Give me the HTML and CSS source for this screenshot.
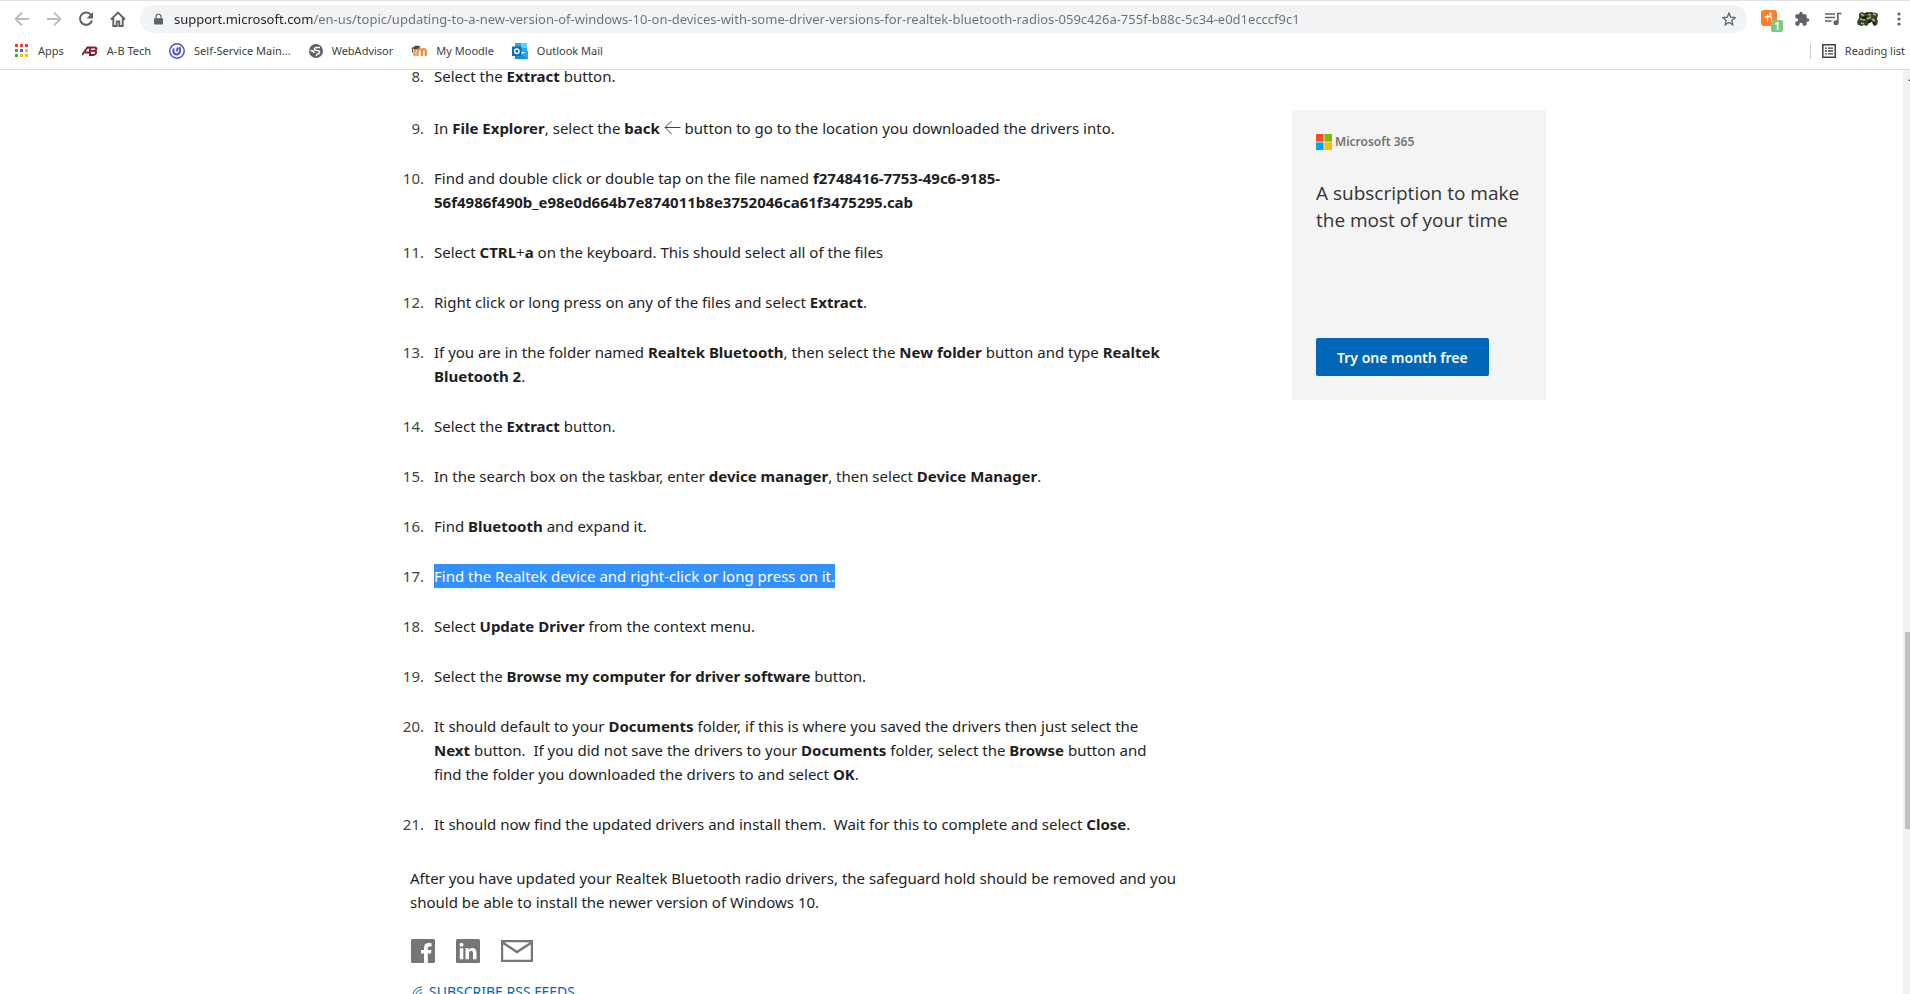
FILE: index.html
```html
<!DOCTYPE html>
<html lang="en">
<head>
<meta charset="utf-8">
<title>Updating to a new version of Windows 10</title>
<link rel="stylesheet" href="styles.css">
</head>
<body>
<header class="browser">
  <div class="toolbar">
    <nav class="nav-buttons" aria-label="Browser navigation">
      <button class="icon-button muted" aria-label="Back"><svg width="16" height="16" viewBox="0 0 16 16"><path d="M15 8H2M8 1.5 1.5 8 8 14.500" fill="none" stroke="currentColor" stroke-width="1.800"/></svg></button>
      <button class="icon-button muted" aria-label="Forward"><svg width="16" height="16" viewBox="0 0 16 16"><path d="M1 8h13M8 1.500 14.500 8 8 14.500" fill="none" stroke="currentColor" stroke-width="1.800"/></svg></button>
      <button class="icon-button" aria-label="Reload"><svg width="16" height="16" viewBox="0 0 16 16"><path d="M13.300 4.200A6.200 6.200 0 1 0 14 9.700" fill="none" stroke="currentColor" stroke-width="2"/><path d="M15 1v6.500H8.500z" fill="currentColor"/></svg></button>
      <button class="icon-button" aria-label="Home"><svg width="16" height="16" viewBox="0 0 16 16"><path d="M1 8.500 8 1.500l7 7M3.300 7v8h3.400v-4.500h2.600V15h3.400V7" fill="none" stroke="currentColor" stroke-width="1.900"/></svg></button>
    </nav>
    <div class="address">
      <svg class="lock" width="9" height="13" viewBox="0 0 10 13"><path d="M1 5h8q1 0 1 1v5q0 1-1 1H1q-1 0-1-1V6q0-1 1-1z" fill="currentColor"/><path d="M2.200 6V3.500a2.800 2.800 0 0 1 5.600 0V6" fill="none" stroke="currentColor" stroke-width="1.300"/></svg>
      <input class="url" type="text" aria-label="Address" value="support.microsoft.com/en-us/topic/updating-to-a-new-version-of-windows-10-on-devices-with-some-driver-versions-for-realtek-bluetooth-radios-059c426a-755f-b88c-5c34-e0d1ecccf9c1">
      <button class="icon-button" aria-label="Bookmark this page"><svg width="14" height="14" viewBox="0 0 14 14"><path d="m7 1 1.700 4.100 4.500.4-3.400 2.900 1 4.400L7 10.500l-3.800 2.300 1-4.400L.8 5.500l4.500-.4z" fill="none" stroke="currentColor" stroke-width="1.300"/></svg></button>
    </div>
    <div class="extensions">
      <button class="icon-button honey" aria-label="Honey"><svg width="22" height="22" viewBox="0 0 22 22"><rect width="16" height="16" rx="3" fill="#ff7e27"/><path d="M6.500 4.200v8M6.500 8.500c0-3 4-2.500 4 0V12M3.800 6.800c3.500.4 6-1 6.200-3.300M8.500 4.300c0-1.800 2.500-1.200 1.300.6" fill="none" stroke="#fff" stroke-width="1.200"/></svg><span class="badge">1</span></button>
      <button class="icon-button" aria-label="Extensions"><svg width="16" height="16" viewBox="0 0 24 24"><path d="M20.500 11H19V7c0-1.100-.9-2-2-2h-4V3.500a2.500 2.500 0 0 0-5 0V5H4c-1.100 0-2 .9-2 2v3.800h1.500a2.700 2.700 0 0 1 0 5.400H2V20c0 1.100.9 2 2 2h3.800v-1.500a2.700 2.700 0 0 1 5.400 0V22H17c1.100 0 2-.9 2-2v-4h1.500a2.500 2.500 0 0 0 0-5z" fill="currentColor"/></svg></button>
      <button class="icon-button" aria-label="Media controls"><svg width="17" height="14" viewBox="0 0 17 14"><path d="M0 2h10M0 5.500h10M0 9h6.500M12.800 11V1.500H16.500" fill="none" stroke="currentColor" stroke-width="1.700"/><circle cx="11" cy="10.800" r="2.500" fill="currentColor"/></svg></button>
      <button class="icon-button" aria-label="Profile"><svg width="22" height="16" viewBox="0 0 22 16"><path d="M2 3 4 1l4 1 5-1 7 1 1 2-1 4 1 2-1 4-3 1-2-4-3 1-2 3-3-1-2 1-4-1-1-3 2-4z" fill="#364427"/><path d="m4 3 3 2M9 3l5 1M16 3l3 1M3 8l5 1M10 8l4-2M15 8l3 2M4 12l3 1" stroke="#b9ad83" stroke-width="1.700"/><path d="m5 7 4-1M11 11l3-1M16 12l2 1M9 2l2 1" stroke="#101910" stroke-width="2"/></svg></button>
      <button class="icon-button menu" aria-label="Browser menu"><svg width="4" height="14" viewBox="0 0 4 14"><g fill="currentColor"><circle cx="2" cy="2" r="1.600"/><circle cx="2" cy="7" r="1.600"/><circle cx="2" cy="12" r="1.600"/></g></svg></button>
    </div>
  </div>
  <nav class="bookmarks" aria-label="Bookmarks">
    <a href="#" class="bookmark apps"><svg width="14" height="14" viewBox="0 0 14 14"><path d="M0 0h3v3H0zM5 0h3v3H5zM10 0h3v3h-3z" fill="#ea4335"/><path d="M0 5h3v3H0zM0 10h3v3H0z" fill="#34a853"/><path d="M5 5h3v3H5z" fill="#1a73e8"/><path d="M10 5h3v3h-3zM5 10h3v3H5zM10 10h3v3h-3z" fill="#fbbc04"/></svg><span>Apps</span></a>
    <a href="#" class="bookmark abtech"><svg width="16" height="16" viewBox="0 0 16 16"><path d="M0 12 5.500 4.500H8V12M3 9.500h5M8 12V4.500h4.500q2.500.3 1.700 2-.4 1.200-2.200 1.400 2.800.4 2 2.300-.7 1.800-2.800 1.800zM9 7.900h4" fill="none" stroke="#8c1630" stroke-width="1.900"/></svg><span>A-B Tech</span></a>
    <a href="#" class="bookmark service"><svg width="16" height="16" viewBox="0 0 16 16"><circle cx="8" cy="8" r="7.200" fill="none" stroke="#4d4fcf" stroke-width="1.500"/><path d="M4.800 5.500C3.500 9 5 11.500 7.500 11.500c3 0 4.800-4 3-7.500M8.800 4.500 7.800 8.500" fill="none" stroke="#4d4fcf" stroke-width="2"/></svg><span>Self-Service Main...</span></a>
    <a href="#" class="bookmark webadvisor"><svg width="14" height="14" viewBox="0 0 14 14"><circle cx="7" cy="7" r="7" fill="#5f6368"/><path d="M11 3.500H7.500q-2 0-2 1.500T8 6.500q2.500 0 2.500 1.700T8.500 10q-1 0-1 2M1.500 6.500q3.500 0 3.500 2.500" fill="none" stroke="#fff" stroke-width="1.500"/></svg><span>WebAdvisor</span></a>
    <a href="#" class="bookmark moodle"><svg width="16" height="16" viewBox="0 0 16 16"><path d="M3.500 13V8q0-1.500 1.500-1.500M6.500 13V8.500Q6.800 6 8.800 6 11 6 11 8.500V13M11 13V8.500Q11 6 13 6q1.800 0 1.800 2.500V13" fill="none" stroke="#f68b32" stroke-width="2.200"/><path d="m0 5.500 5-3 5 1-4 3z" fill="#4a4a4a"/><path d="M1.500 5.500v4" stroke="#555"/></svg><span>My Moodle</span></a>
    <a href="#" class="bookmark outlook"><svg width="16" height="16" viewBox="0 0 16 16"><path d="M3 0h12v9H3z" fill="#28a8ea"/><path d="M9 0h6v5H9z" fill="#50d9ff"/><path d="M3 4h6v5H3z" fill="#0364b8"/><path d="m3 8 6.500 4L16 8v8H3z" fill="#1490df"/><path d="m9 11 7 5V8z" fill="#28a8ea"/><path d="M0 3.500h9.500V13H0z" fill="#0f6cbd"/><circle cx="4.800" cy="8.200" r="2.200" fill="none" stroke="#fff" stroke-width="1.500"/></svg><span>Outlook Mail</span></a>
    <a href="#" class="bookmark reading"><svg width="14" height="14" viewBox="0 0 14 14"><path d="M.8.8h12.400v12.400H.8z" fill="none" stroke="currentColor" stroke-width="1.500"/><path d="M3 4.200h2M6 4.200h5M3 7h2M6 7h5M3 9.800h2M6 9.800h5" stroke="currentColor" stroke-width="1.300"/></svg><span>Reading list</span></a>
  </nav>
</header>
<div class="viewport">
  <div class="page">
    <main class="article">
      <ol class="steps" start="8">
        <li><p>Select the <b>Extract</b> button.</p></li>
        <li class="tall"><p>In <b>File Explorer</b>, select the <b>back</b> <svg class="arrow" width="17" height="15" viewBox="0 0 17 15"><path d="M16.500 7.500H1M7.500 1 1 7.500 7.500 14" fill="none" stroke="currentColor"/></svg> button to go to the location you downloaded the drivers into.</p></li>
        <li><p>Find and double click or double tap on the file named <b>f2748416-7753-49c6-9185-<wbr>56f4986f490b_e98e0d664b7e874011b8e3752046ca61f3475295.cab</b></p></li>
        <li><p>Select <b>CTRL</b>+<b>a</b> on the keyboard. This should select all of the files</p></li>
        <li><p>Right click or long press on any of the files and select <b>Extract</b>.</p></li>
        <li><p>If you are in the folder named <b>Realtek Bluetooth</b>, then select the <b>New folder</b> button and type <b>Realtek Bluetooth 2</b>.</p></li>
        <li><p>Select the <b>Extract</b> button.</p></li>
        <li><p>In the search box on the taskbar, enter <b>device manager</b>, then select <b>Device Manager</b>.</p></li>
        <li><p>Find <b>Bluetooth</b> and expand it.</p></li>
        <li><p><span class="selected">Find the Realtek device and right-click or long press on it.</span></p></li>
        <li><p>Select <b>Update Driver</b> from the context menu.</p></li>
        <li><p>Select the <b>Browse my computer for driver software</b> button.</p></li>
        <li><p>It should default to your <b>Documents</b> folder, if this is where you saved the drivers then just select the <b>Next</b> button.&nbsp; If you did not save the drivers to your <b>Documents</b> folder, select the <b>Browse</b> button and find the folder you downloaded the drivers to and select <b>OK</b>.</p></li>
        <li><p>It should now find the updated drivers and install them.&nbsp; Wait for this to complete and select <b>Close</b>.</p></li>
      </ol>
      <p class="closing">After you have updated your Realtek Bluetooth radio drivers, the safeguard hold should be removed and you should be able to install the newer version of Windows 10.</p>
      <div class="share">
        <a href="#" aria-label="Share on Facebook"><svg width="24" height="24" viewBox="0 0 24 24"><path d="M1.500 0h21Q24 0 24 1.500v21q0 1.500-1.500 1.500h-5.700v-9.500h3.200l.5-3.500h-3.700V9.300c0-1 .4-1.800 1.800-1.800H20.500V4.300C16 3.500 13 4.700 13 8.800V11H10v3.500h3V24H1.500Q0 24 0 22.500v-21Q0 0 1.500 0z" fill="currentColor"/></svg></a>
        <a href="#" aria-label="Share on LinkedIn"><svg width="24" height="24" viewBox="0 0 24 24"><rect width="24" height="24" rx="1.500" fill="currentColor"/><circle cx="5.500" cy="5.700" r="2" fill="#fff"/><path d="M3.800 9.200h3.500v11H3.800zM9.500 9.200h3.300v1.500c1.800-2.800 7.700-2.500 7.700 2.800v6.700H17v-6c0-3.200-4-3-4 0v6H9.500z" fill="#fff"/></svg></a>
        <a href="#" aria-label="Share by email"><svg width="32" height="22" viewBox="0 0 32 22"><path d="M1 1h30v20H1zM1.500 2.500 16 12 30.500 2.500" fill="none" stroke="currentColor" stroke-width="2.400"/></svg></a>
      </div>
      <a href="#" class="rss"><svg width="12" height="12" viewBox="0 0 12 12"><path d="M1 8Q3 1 10 1M3.500 9Q5 4 10 3.500M6 10q1-3 4-3.500" fill="none" stroke="currentColor"/></svg><span>SUBSCRIBE RSS FEEDS</span></a>
    </main>
    <aside class="promo">
      <div class="brand"><svg width="16" height="16" viewBox="0 0 16 16"><path d="M0 0h7.600v7.600H0z" fill="#f25022"/><path d="M8.400 0H16v7.600H8.400z" fill="#7fba00"/><path d="M0 8.400h7.600V16H0z" fill="#00a4ef"/><path d="M8.400 8.400H16V16H8.400z" fill="#ffb900"/></svg><span>Microsoft 365</span></div>
      <h2>A subscription to make the most of your time</h2>
      <button class="cta">Try one month free</button>
    </aside>
  </div>
  <div class="scrollbar"><svg width="7" height="12" viewBox="0 0 7 12"><path d="m5 7 4-4v4z" fill="#505050"/></svg><div class="thumb"></div></div>
</div>
</body>
</html>
```
FILE: styles.css
```css
* { box-sizing: border-box; }
body {
  margin: 0;
  height: 100vh;
  display: flex;
  flex-direction: column;
  overflow: hidden;
  background: #fff;
  color: #1e1e1e;
  font-family: "Noto Sans", "Open Sans", sans-serif;
  font-size: 15px;
  line-height: 24px;
}
p, h2, ol { margin: 0; padding: 0; }
svg { display: block; flex: none; }
button { font-family: inherit; cursor: pointer; }
a { text-decoration: none; color: inherit; }

.browser {
  flex: none;
  border-top: 1px solid #dee1e6;
  border-bottom: 1px solid #d9dadc;
  color: #5f6368;
}
.toolbar { display: flex; align-items: center; padding: 4px 9px 0 14px; }
.nav-buttons { display: flex; gap: 16px; padding-right: 14px; }
.icon-button {
  display: flex;
  border: 0;
  padding: 0;
  background: none;
  color: #5f6368;
}
.muted { color: #babcbe; }
.address {
  flex: 1;
  display: flex;
  align-items: center;
  height: 28px;
  padding: 0 11px 0 14px;
  border-radius: 14px;
  background: #f1f3f4;
}
.url {
  flex: 1;
  min-width: 0;
  height: 24px;
  margin-left: 11px;
  border: 0;
  padding: 0;
  font-family: inherit;
  font-size: 13px;
  color: transparent;
  background: linear-gradient(to right, #202124 140px, #6b6f73 140px);
  background-clip: text;
}
.extensions { display: flex; align-items: center; gap: 15px; padding-left: 14px; }
.honey { position: relative; padding-top: 4px; margin-right: -4px; }
.menu { margin-left: 3px; }
.badge {
  position: absolute;
  right: 0;
  bottom: 0;
  width: 12px;
  height: 12px;
  border-radius: 2px;
  background: #81c784;
  color: #fff;
  font-size: 10px;
  font-weight: 700;
  line-height: 12px;
}
.bookmarks {
  display: flex;
  align-items: center;
  height: 36px;
  padding: 0 5px 0 15px;
  gap: 18px;
  font-size: 11px;
  color: #3c4043;
}
.bookmark { display: flex; align-items: center; gap: 9px; white-space: nowrap; }
.reading {
  margin-left: auto;
  height: 16px;
  padding-left: 11px;
  border-left: 1px solid #c8cacd;
}

.viewport { flex: 1; min-height: 0; display: flex; overflow: hidden; }
.page {
  flex: 1;
  display: flex;
  justify-content: space-between;
  align-items: flex-start;
  padding: 0 357px 0 402px;
}
.article { width: 780px; margin-top: -6px; }
.steps {
  display: grid;
  gap: 26px;
  padding-right: 10px;
  list-style: none;
  counter-reset: step 7;
}
.steps li { display: flex; gap: 10px; counter-increment: step; }
.steps li::before {
  content: counter(step) ".";
  flex: none;
  width: 22px;
  display: flex;
  justify-content: flex-end;
  color: #444;
}
.tall { padding-top: 2px; }
b { font-weight: 700; }
.arrow { display: inline-block; vertical-align: -1px; color: #444; }
.selected { display: inline-block; background: #3390ff; color: #fff; }
.closing { margin: 30px 0 0 8px; }
.share {
  display: flex;
  align-items: center;
  gap: 21px;
  margin: 25px 0 0 9px;
  color: #767676;
}
.rss {
  display: flex;
  align-items: center;
  gap: 5px;
  margin: 17px 0 0 10px;
  color: #0067b8;
  font-size: 14px;
}

.promo {
  flex: none;
  width: 254px;
  height: 290px;
  display: flex;
  flex-direction: column;
  align-items: flex-start;
  margin-top: 40px;
  padding: 20px 16px 24px 24px;
  background: #f4f4f4;
}
.brand {
  display: flex;
  align-items: center;
  gap: 3px;
  color: #737373;
  font-size: 12px;
  font-weight: 600;
}
.promo h2 {
  margin-top: 26px;
  color: #333;
  font-family: "Open Sans", "Noto Sans", sans-serif;
  font-size: 19px;
  font-weight: 400;
  line-height: 27px;
}
.cta {
  margin-top: auto;
  height: 38px;
  padding: 0 21px;
  border: 0;
  border-radius: 2px;
  background: #0067b8;
  color: #fff;
  font-size: 14px;
  font-weight: 600;
}

.scrollbar { flex: none; width: 7px; padding-top: 4px; background: #f1f1f1; }
.thumb { height: 197px; margin: 546px 0 0 2px; background: #c1c1c1; }
```
